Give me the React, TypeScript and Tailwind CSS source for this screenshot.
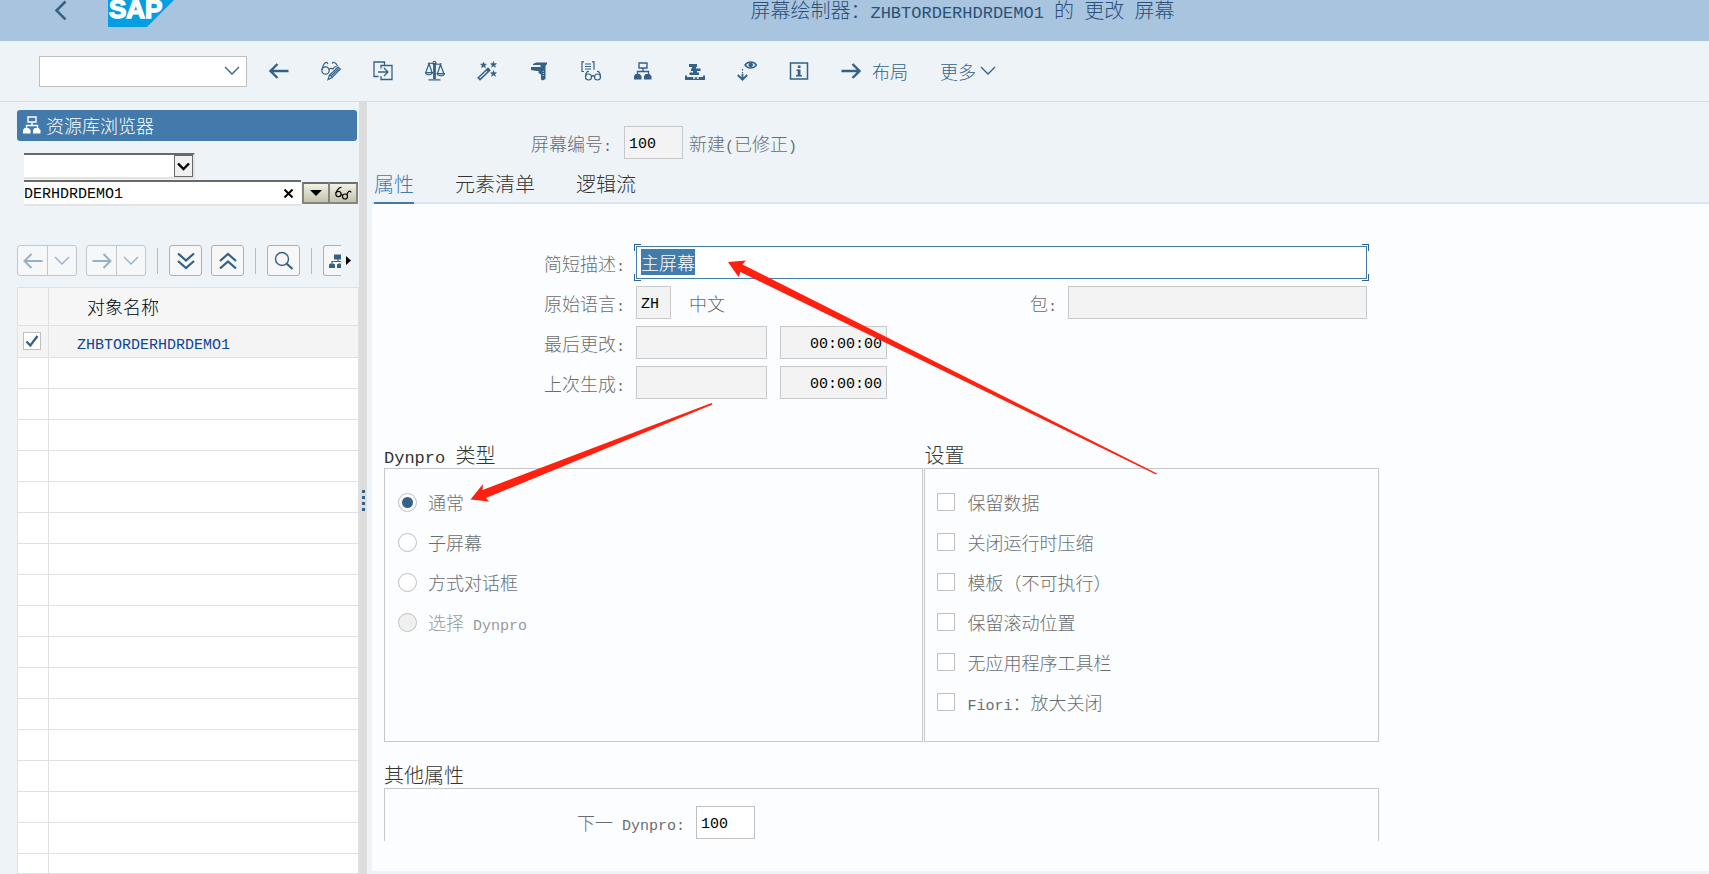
import { useEffect, useRef, useState } from 'react';
import type { ReactNode } from 'react';

const SCREEN_NAME = 'ZHBTORDERHDRDEMO1';

const dynproTypes = [
  { id: 'normal', label: '通常', disabled: false },
  { id: 'subscreen', label: '子屏幕', disabled: false },
  { id: 'modal', label: '方式对话框', disabled: false },
  { id: 'selection', label: '选择 Dynpro', disabled: true },
];

const settings = [
  { id: 'hold', label: '保留数据' },
  { id: 'compress', label: '关闭运行时压缩' },
  { id: 'template', label: '模板（不可执行）' },
  { id: 'scroll', label: '保留滚动位置' },
  { id: 'notoolbar', label: '无应用程序工具栏' },
  { id: 'fiori', label: 'Fiori：放大关闭' },
];

const tabs = ['属性', '元素清单', '逻辑流'];

// Latin runs are set in a mono face at half the width of a Chinese character
function Txt({ children, large = false }: { children: string; large?: boolean }) {
  const parts = children.split(/([\x20-\x7e]+)/).filter(Boolean);
  return (
    <span className="whitespace-pre">
      {parts.map((part, i) =>
        /^[\x20-\x7e]/.test(part) ? (
          <span
            key={i}
            className={
              large
                ? "font-['Liberation_Mono',monospace] text-[17px] leading-none"
                : "font-['Liberation_Mono',monospace] text-[15px] leading-none"
            }
          >
            {part}
          </span>
        ) : (
          part
        )
      )}
    </span>
  );
}

function Icon({ children }: { children: ReactNode }) {
  return (
    <svg
      width="20"
      height="20"
      viewBox="0 0 20 20"
      fill="none"
      stroke="currentColor"
      strokeWidth="1.2"
      className="shrink-0"
      aria-hidden="true"
    >
      {children}
    </svg>
  );
}

const ArrowLeft = ({ w = 2.4 }: { w?: number }) => (
  <Icon>
    <path d="M19.5 10H1.5M8.5 3 1.5 10l7 7" strokeWidth={w} />
  </Icon>
);

const ArrowRight = ({ w = 2.4 }: { w?: number }) => (
  <Icon>
    <path d="M.5 10h18M11.5 3l7 7-7 7" strokeWidth={w} />
  </Icon>
);

const ChevronDown = () => (
  <svg
    width="16"
    height="16"
    viewBox="0 0 16 16"
    fill="none"
    stroke="currentColor"
    strokeWidth="1.3"
    className="shrink-0"
    aria-hidden="true"
  >
    <path d="m1 4 7 7 7-7" />
  </svg>
);

const Hierarchy = () => (
  <Icon>
    <path d="M6 2h8v5H6zM10 7v3.500M4.500 14v-3.500h11V14" strokeWidth="1.4" />
    <path d="M1 15 2.500 13h4L8.500 15V18.500H1zM11 15 12.500 13h4l2 2V18.500H11z" fill="currentColor" stroke="none" />
  </Icon>
);

const toolbarIcons: { label: string; icon: ReactNode }[] = [
  { label: '返回', icon: <ArrowLeft /> },
  {
    label: '显示/更改',
    icon: (
      <Icon>
        <circle cx="4.500" cy="9.500" r="3.700" />
        <path d="M1 9C1.500 5 3.500 1 6 1.500c1 .2.8 1 .3 1.500M8 9c1-2 3-2 4-.5M11 2.500c1.500-2 4-1 5.500 2.500M12.500 8c0-1.500 1.500-2.500 3-2.500" />
        <path d="m7 18.500 1.500-4.500L17 6l2.300 2.200-8.500 8.500zM9 14l2 2M10 15l7.500-7.300" />
      </Icon>
    ),
  },
  {
    label: '其他对象',
    icon: (
      <Icon>
        <path d="M5.500 15.500H1V1h10.500v3M8 7.500V4.500h11v14H8V15M5 11h9.500M11 7l4 4-4 4" strokeWidth="1.3" />
      </Icon>
    ),
  },
  {
    label: '检查',
    icon: (
      <Icon>
        <path d="M9.500 2v16" strokeWidth="2.800" />
        <path d="M3.500 18.800h12M3 3c2-2 4 0 6.500 0S14 4 16.500 2.500M4 2.500.8 11.500M4 2.500l3 9M15.500 3.500l-3 9M15.500 3.500l3.300 9" />
        <circle cx="9.500" cy="2" r="1.500" />
        <path d="M.5 11.500h7c-.5 3-6.500 3-7 0zM12 12.500h7.500c-.5 3-7 3-7.500 0z" fill="currentColor" fillOpacity=".35" />
      </Icon>
    ),
  },
  {
    label: '激活',
    icon: (
      <Icon>
        <path d="m1.200 16.800 9.800-9.300 1.800 1.800-9.800 9.300z" strokeWidth="1.500" />
        <path d="m8.500 9 2.500-2.500L13 8.500 10.500 11z" fill="currentColor" stroke="none" />
        <path
          d="m6.500 1 .8 2 2.200.2-1.600 1.400.5 2.200-1.900-1.200-1.900 1.200.5-2.200L3.500 3.200 5.700 3zM16.500.5l.8 2 2.200.2-1.600 1.400.5 2.200-1.900-1.200-1.900 1.200.5-2.200-1.600-1.400 2.200-.2zM16.500 9.500l.8 2 2.200.2-1.600 1.400.5 2.200-1.900-1.200-1.900 1.200.5-2.200-1.600-1.400 2.200-.2z"
          fill="currentColor"
          stroke="currentColor"
          strokeWidth=".5"
        />
      </Icon>
    ),
  },
  {
    label: '测试',
    icon: (
      <Icon>
        <path
          d="M4 3 7 1.500h11V3l-1.500 2V18l-3 1.500-1.500-1V13.500l-2.500-1.500V10H7.500L2 9V6h9.500V4H4z"
          fill="currentColor"
          stroke="none"
        />
        <path d="M14.200 10v6" stroke="#eef3f8" strokeWidth=".8" strokeDasharray="1 1" />
      </Icon>
    ),
  },
  {
    label: '使用清单',
    icon: (
      <Icon>
        <path d="M3 .8H1v9.700h2M11 .8h2v8M4 3h6M4 5.500h6M4 8h6" />
        <circle cx="7.500" cy="16" r="3" />
        <circle cx="16.500" cy="16" r="3" />
        <path d="M4.500 15c.5-3 1.500-5 3.500-4.500M19.500 15c-.5-3-1.500-5-3.500-4.500M10.500 15.500c.8-.8 2.200-.8 3 0" />
      </Icon>
    ),
  },
  { label: '显示对象清单', icon: <Hierarchy /> },
  {
    label: '显示导航窗口',
    icon: (
      <Icon>
        <path
          d="M4 3h8v3H4zM7 6h4v1.500H7zM6 7.500h9.500v2.500H6zM8 10h4v1.500H8zM4.500 11.500H14V14H4.500zM0 14.500h2V16h16v-1.500h2V19H0z"
          fill="currentColor"
          stroke="none"
        />
        <path d="M8 17h6" stroke="#eef3f8" strokeWidth="1.500" />
        <path d="M10 17h2" strokeWidth="1.500" />
      </Icon>
    ),
  },
  {
    label: '显示/隐藏',
    icon: (
      <Icon>
        <path d="M8 4c3-4 8.500-4 11.500 0-3 4-8.500 4-11.500 0z" strokeWidth="1.400" />
        <circle cx="13.700" cy="4" r="1.700" fill="currentColor" />
        <path d="M5.500 8v1.500M5.500 11v1.500" />
        <path d="M5.500 13v6M.8 14l4.700 4.700L10.200 14" strokeWidth="1.800" />
      </Icon>
    ),
  },
  {
    label: '帮助',
    icon: (
      <Icon>
        <path d="M1.500 2h17v16h-17z" strokeWidth="1.500" />
        <path d="M8.800 4.500h2.700V7H8.800zM7.500 8.500h4V14H13v1.500H7V14h1.700v-4H7.500z" fill="currentColor" stroke="none" />
      </Icon>
    ),
  },
];

function Header() {
  return (
    <header className="flex h-[41px] shrink-0 items-start bg-[#a9c4de] text-[#2b5078]">
      <button aria-label="返回" className="ml-[51px] h-5 w-5">
        <svg width="20" height="20" viewBox="0 0 20 20" fill="none" stroke="#346187" strokeWidth="2.500">
          <path d="M14.500 1.500 5.500 10.500l9 9" />
        </svg>
      </button>
      <svg width="66" height="27" viewBox="0 0 66 27" className="ml-[37px]" role="img" aria-label="SAP">
        <path d="M0 0h66L39 27H0z" fill="#049fe1" />
        <text
          x="1"
          y="18"
          fill="#fff"
          stroke="#fff"
          strokeWidth="1.500"
          fontFamily="Liberation Sans, Arial, sans-serif"
          fontWeight="700"
          fontSize="26"
        >
          SAP
        </text>
      </svg>
      <h1 className="grow pl-[42px] text-center text-[20px] leading-5">
        <Txt large>{`屏幕绘制器：${SCREEN_NAME} 的 更改 屏幕`}</Txt>
      </h1>
    </header>
  );
}

function Toolbar() {
  return (
    <div className="flex h-[61px] shrink-0 items-center gap-8 border-b border-[#d0dfeb] pl-[39px] text-[#346187]">
      <div className="-mr-[10px] flex h-[31px] w-[208px] items-center border border-[#bfbfbf] bg-white">
        <input aria-label="命令" className="h-full min-w-0 grow px-2 outline-none" />
        <button aria-label="命令历史" className="px-[6px]">
          <ChevronDown />
        </button>
      </div>
      {toolbarIcons.map((item) => (
        <button key={item.label} aria-label={item.label}>
          {item.icon}
        </button>
      ))}
      <button className="flex items-center gap-[11px]">
        <ArrowRight />
        布局
      </button>
      <button className="flex items-center gap-1">
        更多
        <ChevronDown />
      </button>
    </div>
  );
}

function NavPair({ label, children }: { label: string; children: ReactNode }) {
  return (
    <div className="flex h-[31px] w-[60px] shrink-0 rounded-[3px] border border-[#c4c6c8] bg-[#f5f7f9] text-[#95b0c8]">
      <button aria-label={label} className="flex w-[30px] items-center justify-center border-r border-[#c4c6c8]">
        {children}
      </button>
      <button aria-label={`${label}历史`} className="flex grow items-center justify-center">
        <ChevronDown />
      </button>
    </div>
  );
}

function ToolButton({ label, children }: { label: string; children: ReactNode }) {
  return (
    <button
      aria-label={label}
      className="flex h-[31px] w-[33px] shrink-0 items-center justify-center rounded-[3px] border border-[#aeb0b2] bg-[#f7f7f7] text-[#346187]"
    >
      {children}
    </button>
  );
}

const Separator = () => <span className="mx-[2px] h-[26px] w-px shrink-0 bg-[#b9bdc1]" />;

function Sidebar() {
  const [checked, setChecked] = useState(true);

  return (
    <aside className="flex w-[359px] shrink-0 flex-col pl-[17px] pt-2">
      <h2 className="mr-[2px] flex h-[31px] shrink-0 items-center gap-1 rounded-[3px] bg-[#427aab] pb-[2px] pl-[5px] text-white">
        <Hierarchy />
        资源库浏览器
      </h2>

      <div className="ml-[7px] mt-3 flex h-[26px] w-[171px] shrink-0 border-b-2 border-r-2 border-t-2 border-b-[#e3e3e3] border-r-[#e3e3e3] border-t-[#696969] bg-white">
        <div className="relative flex grow">
          <select aria-label="对象类型" className="grow appearance-none bg-white outline-none" defaultValue="">
            <option value=""></option>
          </select>
          <span className="pointer-events-none absolute inset-y-0 right-0 flex w-[19px] items-center justify-center border border-[#696969] bg-[#f0f0f0] text-black">
            <svg width="13" height="9" viewBox="0 0 13 9" fill="none" stroke="currentColor" strokeWidth="2.400">
              <path d="M1 1.500 6.500 7 12 1.500" />
            </svg>
          </span>
        </div>
      </div>

      <div className="ml-[7px] mt-px flex h-[26px] shrink-0 items-center">
        <div className="flex h-full w-[277px] items-center border-b-2 border-t-2 border-b-[#e3e3e3] border-t-[#696969] bg-white">
          <input
            aria-label="对象名称"
            defaultValue="DERHDRDEMO1"
            className="min-w-0 grow pt-[3px] font-['Liberation_Mono',monospace] text-[15px] text-black outline-none"
          />
          <button aria-label="清除" className="mr-2 text-black">
            <svg width="9" height="9" viewBox="0 0 9 9" fill="none" stroke="currentColor" strokeWidth="2">
              <path d="m.5.5 8 8M8.500.5l-8 8" />
            </svg>
          </button>
        </div>
        <button
          aria-label="历史对象"
          className="ml-px flex h-[22px] w-7 items-center justify-center border-2 border-[#85857a] border-t-[#6f6f6f] bg-linear-to-b from-[#f2f2e4] to-[#c2c2ae]"
        >
          <svg width="12" height="6" viewBox="0 0 12 6">
            <path d="M0 0h12L6 6z" />
          </svg>
        </button>
        <button
          aria-label="显示"
          className="flex h-[22px] w-7 items-center justify-center border-y-2 border-r-2 border-[#85857a] border-t-[#6f6f6f] bg-linear-to-b from-[#f2f2e4] to-[#c2c2ae]"
        >
          <svg width="17" height="14" viewBox="0 0 17 14" fill="none" stroke="#000" strokeWidth="1.200">
            <circle cx="3.500" cy="8" r="2.700" />
            <circle cx="10" cy="10.500" r="2.500" />
            <path d="M1 7C2 4 4.500 1 6.500 1.500M6 8.500l2 1M12 9c0-3 3.500-5.500 4-2.500" />
          </svg>
        </button>
      </div>

      <div className="mt-[39px] flex h-[31px] shrink-0 items-center gap-[9px]">
        <NavPair label="后退">
          <ArrowLeft w={2} />
        </NavPair>
        <NavPair label="前进">
          <ArrowRight w={2} />
        </NavPair>
        <Separator />
        <ToolButton label="全部展开">
          <Icon>
            <path d="m2 2.500 8 7 8-7M2 10l8 7 8-7" strokeWidth="2.300" />
          </Icon>
        </ToolButton>
        <ToolButton label="全部折叠">
          <Icon>
            <path d="m2 10 8-7 8 7M2 17.500l8-7 8 7" strokeWidth="2.300" />
          </Icon>
        </ToolButton>
        <Separator />
        <ToolButton label="查找">
          <Icon>
            <circle cx="8" cy="8" r="6.500" strokeWidth="1.400" />
            <path d="m12.500 12.500 6 5.500" strokeWidth="2.200" />
          </Icon>
        </ToolButton>
        <Separator />
        <div className="flex h-[31px] w-[18px] shrink-0 items-center overflow-hidden rounded-l-[3px] border-y border-l border-[#aeb0b2] bg-[#f7f7f7] pl-[5px] text-[#346187]">
          <Icon>
            <path
              d="M5 3.500h8v5H5zM0 13.500l1.500-1h3l1.500 1V17H0zM8 13.500l1.500-1h4V17H8z"
              fill="currentColor"
              stroke="none"
            />
            <path d="M9 8v2.500M3 12.500v-2h9" />
          </Icon>
        </div>
        <button aria-label="更多" className="-ml-[4px] shrink-0">
          <svg width="5" height="9" viewBox="0 0 5 9">
            <path d="M0 0v9l5-4.500z" />
          </svg>
        </button>
      </div>

      <div className="mt-[11px] min-h-0 grow basis-0 overflow-hidden border-y border-[#dfe1e3]">
        <table className="w-full table-fixed border-collapse bg-white">
          <thead>
            <tr className="h-[37px] bg-[#f6f6f6]">
              <th className="w-[31px] border-x border-b border-[#dfe1e3]" aria-label="选择"></th>
              <th className="border-b border-r border-[#dfe1e3] pl-[38px] text-left font-light text-black">对象名称</th>
            </tr>
          </thead>
          <tbody>
            <tr className="h-8 bg-[#f4f4f4]">
              <td className="border border-[#dfe1e3]">
                <input
                  type="checkbox"
                  aria-label={SCREEN_NAME}
                  checked={checked}
                  onChange={(e) => setChecked(e.target.checked)}
                  className="sr-only"
                />
                <span
                  className="ml-[5px] flex h-[18px] w-[18px] items-center justify-center border border-[#bfbfbf] bg-white text-[#346187]"
                  onClick={() => setChecked(!checked)}
                >
                  {checked && (
                    <svg width="14" height="14" viewBox="0 0 14 14" fill="none" stroke="currentColor" strokeWidth="2.300">
                      <path d="m1.500 7.500 3.800 4L12.500 2" />
                    </svg>
                  )}
                </span>
              </td>
              <td className="border border-[#dfe1e3] pl-7 text-[#0b4596]">
                <a href="#object">
                  <Txt>{SCREEN_NAME}</Txt>
                </a>
              </td>
            </tr>
            {Array.from({ length: 17 }, (_, i) => (
              <tr key={i} className="h-[31px]">
                <td className="border border-[#dfe1e3]"></td>
                <td className="border border-[#dfe1e3]"></td>
              </tr>
            ))}
          </tbody>
        </table>
      </div>
    </aside>
  );
}

function Field({ id, value = '', className = '' }: { id: string; value?: string; className?: string }) {
  return (
    <input
      id={id}
      readOnly
      value={value}
      className={`h-[33px] border border-[#c6c8ca] bg-[#f3f3f3] px-1 pt-[3px] font-['Liberation_Mono',monospace] text-[15px] text-black outline-none ${className}`}
    />
  );
}

function FormLabel({ htmlFor, children }: { htmlFor: string; children: string }) {
  return (
    <label htmlFor={htmlFor} className="w-[92px] shrink-0">
      <Txt>{children}</Txt>
    </label>
  );
}

function PropertyForm() {
  const titleRef = useRef<HTMLInputElement>(null);

  useEffect(() => {
    titleRef.current?.focus();
    titleRef.current?.select();
  }, []);

  return (
    <div className="flex flex-col gap-[7px] pl-40 pr-3 pt-[42px]">
      <div className="flex items-center">
        <FormLabel htmlFor="title">简短描述:</FormLabel>
        <div className="relative grow">
          <input
            ref={titleRef}
            id="title"
            defaultValue="主屏幕"
            className="block h-[33px] w-full border border-[#427cac] bg-white px-1 pb-[2px] text-[18px] text-black outline-none selection:bg-[#427cac] selection:text-white"
          />
          <span className="absolute -left-[2px] -top-[2px] h-[7px] w-[7px] border-l border-t border-[#346187]" />
          <span className="absolute -right-[2px] -top-[2px] h-[7px] w-[7px] border-r border-t border-[#346187]" />
          <span className="absolute -bottom-[2px] -left-[2px] h-[7px] w-[7px] border-b border-l border-[#346187]" />
          <span className="absolute -bottom-[2px] -right-[2px] h-[7px] w-[7px] border-b border-r border-[#346187]" />
        </div>
      </div>
      <div className="flex items-center">
        <FormLabel htmlFor="language">原始语言:</FormLabel>
        <Field id="language" value="ZH" className="w-[35px]" />
        <span className="ml-[18px]">中文</span>
        <label htmlFor="package" className="ml-auto mr-[11px]">
          <Txt>包:</Txt>
        </label>
        <Field id="package" className="w-[299px]" />
      </div>
      <div className="flex items-center">
        <FormLabel htmlFor="changed-on">最后更改:</FormLabel>
        <Field id="changed-on" className="mr-[13px] w-[131px]" />
        <Field id="changed-at" value="00:00:00" className="w-[107px] text-right" />
      </div>
      <div className="flex items-center">
        <FormLabel htmlFor="generated-on">上次生成:</FormLabel>
        <Field id="generated-on" className="mr-[13px] w-[131px]" />
        <Field id="generated-at" value="00:00:00" className="w-[107px] text-right" />
      </div>
    </div>
  );
}

function GroupTitle({ children }: { children: string }) {
  return (
    <h3 className="flex h-[30px] items-center pt-1 text-[20px] leading-6 text-[#333]">
      <Txt large>{children}</Txt>
    </h3>
  );
}

function Annotations() {
  return (
    <svg className="pointer-events-none absolute left-0 top-0" width="1200" height="520" aria-hidden="true">
      <g fill="#ff2010">
        <path d="M728 262 746 260.500 742.500 264.500 1157 473.500 1156 474.500 740.500 272 738.500 277z" />
        <path d="M470.500 499.500 483 484 482.500 490 711.500 403 712.500 404.500 486 498 489 501.500z" />
      </g>
    </svg>
  );
}

function Content() {
  const [activeTab, setActiveTab] = useState(tabs[0]);
  const [type, setType] = useState('normal');

  return (
    <main className="flex min-w-0 grow flex-col pb-[3px] pl-[5px]">
      <div className="mt-6 flex h-[33px] shrink-0 items-center pl-[159px]">
        <label htmlFor="screen-number" className="w-[93px]">
          <Txt>屏幕编号:</Txt>
        </label>
        <Field id="screen-number" value="100" className="w-[59px]" />
        <span className="ml-[6px]">
          <Txt>新建(已修正)</Txt>
        </span>
      </div>

      <nav className="flex h-[45px] shrink-0 items-end gap-[41px] border-b-2 border-[#d9e4f0] pl-[2px] text-[20px]">
        {tabs.map((tab) => (
          <button
            key={tab}
            onClick={() => setActiveTab(tab)}
            className={
              tab === activeTab
                ? '-mb-[2px] h-[38px] border-b-2 border-[#427aab] text-[#427aab]'
                : '-mb-[2px] h-[38px] border-b-2 border-transparent text-[#333]'
            }
          >
            {tab}
          </button>
        ))}
      </nav>

      <div className="flex min-h-0 grow basis-0 flex-col bg-[#fcfdfe] pb-[30px] pl-3">
        <div className="min-h-0 w-full max-w-[995px] grow basis-0 overflow-hidden">
          <PropertyForm />

          <div className="mt-[39px] grid grid-cols-[540fr_455fr] gap-px">
            <section>
              <GroupTitle>Dynpro 类型</GroupTitle>
              <div className="flex h-[274px] flex-col gap-4 border border-[#c6c8ca] pl-[13px] pt-[21px]">
                {dynproTypes.map((item) => (
                  <label
                    key={item.id}
                    className={
                      item.disabled
                        ? 'flex h-6 items-center gap-[11px] text-[#989a9c]'
                        : 'flex h-6 items-center gap-[11px]'
                    }
                  >
                    <input
                      type="radio"
                      name="dynpro-type"
                      value={item.id}
                      checked={type === item.id}
                      disabled={item.disabled}
                      onChange={() => setType(item.id)}
                      className="h-[19px] w-[19px] appearance-none rounded-full border border-[#bfbfbf] bg-white bg-clip-content p-[3px] checked:bg-[#346187] disabled:bg-[#f0f0f0] disabled:p-0"
                    />
                    <Txt>{item.label}</Txt>
                  </label>
                ))}
              </div>
            </section>
            <section>
              <GroupTitle>设置</GroupTitle>
              <div className="flex h-[274px] flex-col gap-4 border border-[#c6c8ca] pl-3 pt-[21px]">
                {settings.map((item) => (
                  <label key={item.id} className="flex h-6 items-center gap-3">
                    <input
                      type="checkbox"
                      className="h-[18px] w-[18px] appearance-none rounded-[1px] border border-[#bfbfbf] bg-white checked:bg-[#346187]"
                    />
                    <Txt>{item.label}</Txt>
                  </label>
                ))}
              </div>
            </section>
          </div>

          <section className="mt-4">
            <GroupTitle>其他属性</GroupTitle>
            <div className="flex h-40 items-start border border-[#c6c8ca] pl-[192px] pt-[17px]">
              <label htmlFor="next-screen" className="w-[119px] leading-[33px]">
                <Txt>下一 Dynpro:</Txt>
              </label>
              <input
                id="next-screen"
                defaultValue="100"
                className="h-[33px] w-[59px] border border-[#bfbfbf] bg-white px-1 pt-[3px] font-['Liberation_Mono',monospace] text-[15px] text-black outline-none"
              />
            </div>
          </section>
        </div>
      </div>
    </main>
  );
}

export default function App() {
  return (
    <div className="relative flex h-screen flex-col overflow-hidden bg-[#eef3f8] font-['Noto_Sans_CJK_SC',sans-serif] text-[18px] leading-6 font-light text-[#6a6d70]">
      <Header />
      <Toolbar />
      <div className="flex min-h-0 grow">
        <Sidebar />
        <div className="flex w-2 shrink-0 flex-col items-center justify-center gap-[3px] bg-[#dcdcdc] pt-6">
          {[0, 1, 2, 3].map((dot) => (
            <span key={dot} className="h-[3px] w-[3px] bg-[#346187]" />
          ))}
        </div>
        <Content />
      </div>
      <Annotations />
    </div>
  );
}
